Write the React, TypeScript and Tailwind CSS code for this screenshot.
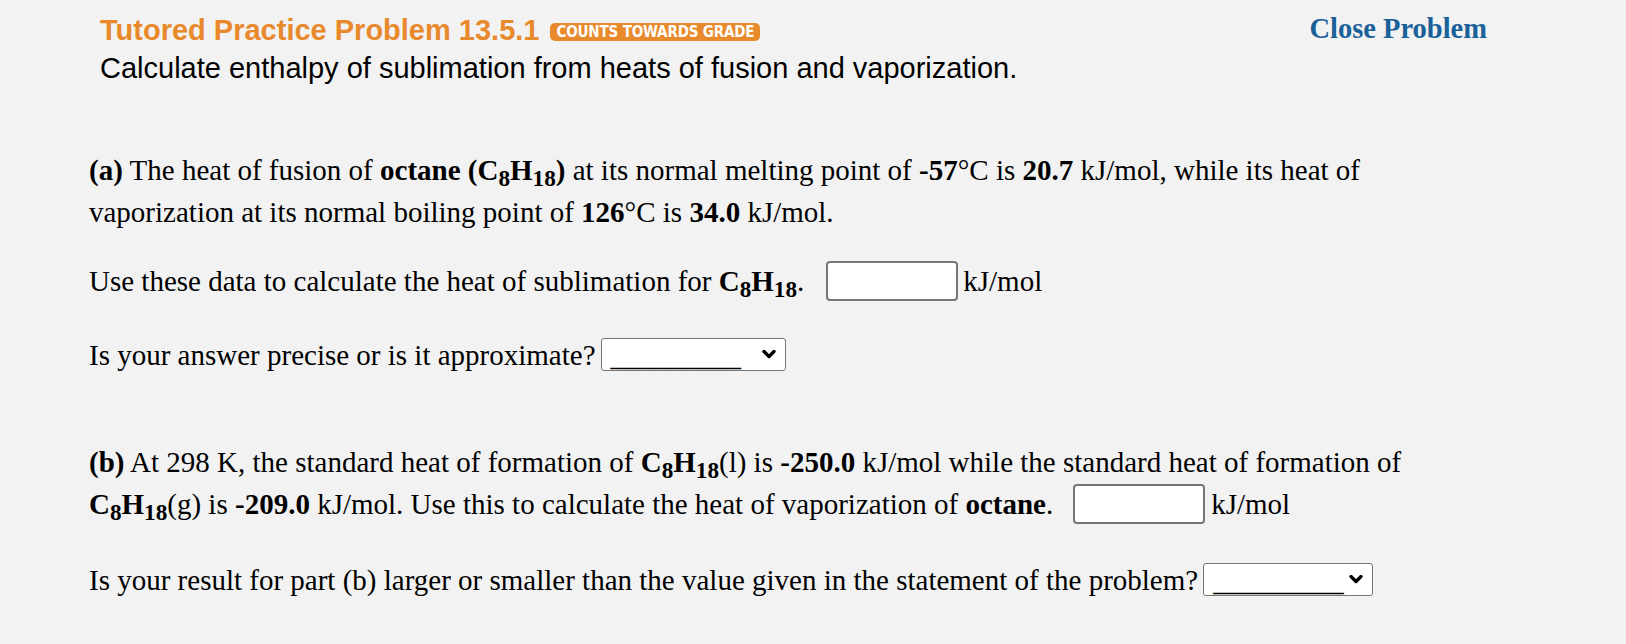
import { ChevronDown } from 'lucide-react';

const SANS = "font-['Liberation_Sans','Helvetica_Neue',Arial,sans-serif]";
const SERIF = "font-['Liberation_Serif','Times_New_Roman',serif]";

function C8H18() {
  return (
    <b>
      C<sub className="text-[0.8em]">8</sub>H<sub className="text-[0.8em]">18</sub>
    </b>
  );
}

function Blank({ className = '' }: { className?: string }) {
  return (
    <input
      type="text"
      aria-label="answer"
      className={`inline-block w-[132px] h-[40px] align-middle bg-white border-2 border-[#767676] rounded-[4px] outline-none ${className}`}
    />
  );
}

function Dropdown({ width }: { width: string }) {
  return (
    <span
      className={`inline-flex items-center justify-between ${width} h-[33px] align-middle bg-white border-[1.5px] border-[#767676] rounded-[3px] pl-[9px] pr-[6px] relative -top-[1px]`}
    >
      <span className="leading-none relative top-[2px]">_________</span>
      <ChevronDown size={20} strokeWidth={4} className="text-black" />
    </span>
  );
}

export default function App() {
  return (
    <div className="min-h-screen w-full bg-[#f2f2f2] text-black">
      <header className="flex justify-between pl-[100px] pr-[139px] pt-[11px]">
        <div className={SANS}>
          <div className="flex items-center h-[38px]">
            <h1 className="text-[29px] font-bold text-[#e8892c] leading-[38px]">Tutored Practice Problem 13.5.1</h1>
            <span className="ml-[11px] mt-[4px] inline-flex items-center h-[18px] px-[6px] rounded-[5px] bg-[#e8892c] text-white font-['DejaVu_Sans_Condensed','Liberation_Sans',sans-serif] text-[15px] font-bold tracking-[-0.15px] leading-none">
              COUNTS TOWARDS GRADE
            </span>
          </div>
          <p className="text-[29px] leading-[38px]">
            Calculate enthalpy of sublimation from heats of fusion and vaporization.
          </p>
        </div>
        <a href="#" className={`${SERIF} text-[28.5px] font-bold text-[#1b6199] leading-[36px]`}>
          Close Problem
        </a>
      </header>

      <main className={`${SERIF} pl-[89px] mt-[62px] text-[29px] leading-[42px] whitespace-nowrap`}>
        <p>
          <b>(a)</b> The heat of fusion of <b>octane (</b>
          <C8H18 />
          <b>)</b> at its normal melting point of <b>-57</b>°C is <b>20.7</b> kJ/mol, while its heat of
          <br />
          vaporization at its normal boiling point of <b>126</b>°C is <b>34.0</b> kJ/mol.
        </p>

        <p className="mt-[27px] flex items-center h-[42px]">
          <span>
            Use these data to calculate the heat of sublimation for <C8H18 />.
          </span>
          <Blank className="ml-[22px] mr-[5px]" />
          <span>kJ/mol</span>
        </p>

        <p className="mt-[32px] flex items-center h-[42px]">
          <span className="mr-[5px]">Is your answer precise or is it approximate?</span>
          <Dropdown width="w-[185px]" />
        </p>

        <p className="mt-[65px]">
          <b>(b)</b> At 298 K, the standard heat of formation of <C8H18 />(l) is <b>-250.0</b> kJ/mol while the
          standard heat of formation of
          <br />
          <span className="inline-flex items-center">
            <span>
              <C8H18 />(g) is <b>-209.0</b> kJ/mol. Use this to calculate the heat of vaporization of{' '}
              <b>octane</b>.
            </span>
            <Blank className="ml-[20px] mr-[6px]" />
            <span>kJ/mol</span>
          </span>
        </p>

        <p className="mt-[34px] flex items-center h-[42px]">
          <span className="mr-[5px]">
            Is your result for part (b) larger or smaller than the value given in the statement of the problem?
          </span>
          <Dropdown width="w-[170px]" />
        </p>
      </main>
    </div>
  );
}
